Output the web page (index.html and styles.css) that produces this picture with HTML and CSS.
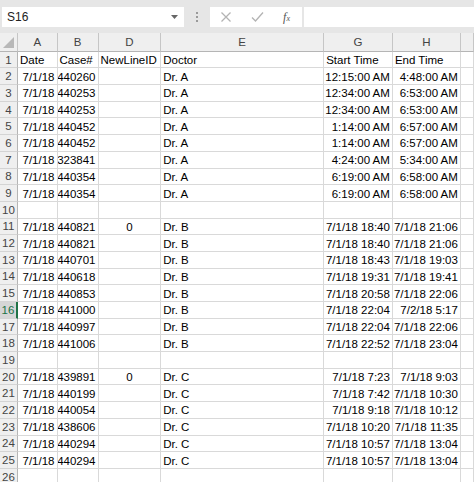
FILE: index.html
```html
<!DOCTYPE html>
<html>
<head>
<meta charset="utf-8">
<link rel="stylesheet" href="styles.css">
</head>
<body>
<div class="fbar">
  <div class="namebox"><span class="nb-text">S16</span>
    <svg class="dd" width="7" height="4" viewBox="0 0 7 4"><polygon points="0,0 7,0 3.5,4" fill="#666"/></svg>
  </div>
  <div class="dots"><i></i><i></i><i></i></div>
  <div class="btns">
    <svg class="ic" width="12" height="12" viewBox="0 0 12 12"><path d="M1.5 1.5 L10.5 10.5 M10.5 1.5 L1.5 10.5" stroke="#b3b3b3" stroke-width="1.3" fill="none"/></svg>
    <svg class="ic" width="13" height="12" viewBox="0 0 13 12"><path d="M1 6.5 L4.5 10 L12 1.5" stroke="#b3b3b3" stroke-width="1.3" fill="none"/></svg>
    <span class="fx">f<sub>x</sub></span>
  </div>
  <div class="finput"></div>
</div>
<div class="sheet">
  <div class="ch corner"><svg width="11" height="11" viewBox="0 0 11 11"><polygon points="11,0 11,11 0,11" fill="#b8b8b8"/></svg></div>
  <div class="ch">A</div><div class="ch">B</div><div class="ch">D</div><div class="ch">E</div><div class="ch">G</div><div class="ch">H</div><div class="ch"></div>

  <div class="rh">1</div><div class="c">Date</div><div class="c">Case#</div><div class="c">NewLineID</div><div class="c">Doctor</div><div class="c">Start Time</div><div class="c">End Time</div><div class="c"></div>
  <div class="rh">2</div><div class="c r">7/1/18</div><div class="c r">440260</div><div class="c"></div><div class="c">Dr. A</div><div class="c r">12:15:00 AM</div><div class="c r">4:48:00 AM</div><div class="c"></div>
  <div class="rh">3</div><div class="c r">7/1/18</div><div class="c r">440253</div><div class="c"></div><div class="c">Dr. A</div><div class="c r">12:34:00 AM</div><div class="c r">6:53:00 AM</div><div class="c"></div>
  <div class="rh">4</div><div class="c r">7/1/18</div><div class="c r">440253</div><div class="c"></div><div class="c">Dr. A</div><div class="c r">12:34:00 AM</div><div class="c r">6:53:00 AM</div><div class="c"></div>
  <div class="rh">5</div><div class="c r">7/1/18</div><div class="c r">440452</div><div class="c"></div><div class="c">Dr. A</div><div class="c r">1:14:00 AM</div><div class="c r">6:57:00 AM</div><div class="c"></div>
  <div class="rh">6</div><div class="c r">7/1/18</div><div class="c r">440452</div><div class="c"></div><div class="c">Dr. A</div><div class="c r">1:14:00 AM</div><div class="c r">6:57:00 AM</div><div class="c"></div>
  <div class="rh">7</div><div class="c r">7/1/18</div><div class="c r">323841</div><div class="c"></div><div class="c">Dr. A</div><div class="c r">4:24:00 AM</div><div class="c r">5:34:00 AM</div><div class="c"></div>
  <div class="rh">8</div><div class="c r">7/1/18</div><div class="c r">440354</div><div class="c"></div><div class="c">Dr. A</div><div class="c r">6:19:00 AM</div><div class="c r">6:58:00 AM</div><div class="c"></div>
  <div class="rh">9</div><div class="c r">7/1/18</div><div class="c r">440354</div><div class="c"></div><div class="c">Dr. A</div><div class="c r">6:19:00 AM</div><div class="c r">6:58:00 AM</div><div class="c"></div>
  <div class="rh">10</div><div class="c"></div><div class="c"></div><div class="c"></div><div class="c"></div><div class="c"></div><div class="c"></div><div class="c"></div>
  <div class="rh">11</div><div class="c r">7/1/18</div><div class="c r">440821</div><div class="c m">0</div><div class="c">Dr. B</div><div class="c r">7/1/18 18:40</div><div class="c r">7/1/18 21:06</div><div class="c"></div>
  <div class="rh">12</div><div class="c r">7/1/18</div><div class="c r">440821</div><div class="c"></div><div class="c">Dr. B</div><div class="c r">7/1/18 18:40</div><div class="c r">7/1/18 21:06</div><div class="c"></div>
  <div class="rh">13</div><div class="c r">7/1/18</div><div class="c r">440701</div><div class="c"></div><div class="c">Dr. B</div><div class="c r">7/1/18 18:43</div><div class="c r">7/1/18 19:03</div><div class="c"></div>
  <div class="rh">14</div><div class="c r">7/1/18</div><div class="c r">440618</div><div class="c"></div><div class="c">Dr. B</div><div class="c r">7/1/18 19:31</div><div class="c r">7/1/18 19:41</div><div class="c"></div>
  <div class="rh">15</div><div class="c r">7/1/18</div><div class="c r">440853</div><div class="c"></div><div class="c">Dr. B</div><div class="c r">7/1/18 20:58</div><div class="c r">7/1/18 22:06</div><div class="c"></div>
  <div class="rh sel">16</div><div class="c r">7/1/18</div><div class="c r">441000</div><div class="c"></div><div class="c">Dr. B</div><div class="c r">7/1/18 22:04</div><div class="c r">7/2/18 5:17</div><div class="c"></div>
  <div class="rh">17</div><div class="c r">7/1/18</div><div class="c r">440997</div><div class="c"></div><div class="c">Dr. B</div><div class="c r">7/1/18 22:04</div><div class="c r">7/1/18 22:06</div><div class="c"></div>
  <div class="rh">18</div><div class="c r">7/1/18</div><div class="c r">441006</div><div class="c"></div><div class="c">Dr. B</div><div class="c r">7/1/18 22:52</div><div class="c r">7/1/18 23:04</div><div class="c"></div>
  <div class="rh">19</div><div class="c"></div><div class="c"></div><div class="c"></div><div class="c"></div><div class="c"></div><div class="c"></div><div class="c"></div>
  <div class="rh">20</div><div class="c r">7/1/18</div><div class="c r">439891</div><div class="c m">0</div><div class="c">Dr. C</div><div class="c r">7/1/18 7:23</div><div class="c r">7/1/18 9:03</div><div class="c"></div>
  <div class="rh">21</div><div class="c r">7/1/18</div><div class="c r">440199</div><div class="c"></div><div class="c">Dr. C</div><div class="c r">7/1/18 7:42</div><div class="c r">7/1/18 10:30</div><div class="c"></div>
  <div class="rh">22</div><div class="c r">7/1/18</div><div class="c r">440054</div><div class="c"></div><div class="c">Dr. C</div><div class="c r">7/1/18 9:18</div><div class="c r">7/1/18 10:12</div><div class="c"></div>
  <div class="rh">23</div><div class="c r">7/1/18</div><div class="c r">438606</div><div class="c"></div><div class="c">Dr. C</div><div class="c r">7/1/18 10:20</div><div class="c r">7/1/18 11:35</div><div class="c"></div>
  <div class="rh">24</div><div class="c r">7/1/18</div><div class="c r">440294</div><div class="c"></div><div class="c">Dr. C</div><div class="c r">7/1/18 10:57</div><div class="c r">7/1/18 13:04</div><div class="c"></div>
  <div class="rh">25</div><div class="c r">7/1/18</div><div class="c r">440294</div><div class="c"></div><div class="c">Dr. C</div><div class="c r">7/1/18 10:57</div><div class="c r">7/1/18 13:04</div><div class="c"></div>
  <div class="rh">26</div><div class="c"></div><div class="c"></div><div class="c"></div><div class="c"></div><div class="c"></div><div class="c"></div><div class="c"></div>
</div>
</body>
</html>
```
FILE: styles.css
```css
html, body {
  margin: 0;
  padding: 0;
  background: #ffffff;
  overflow: hidden;
}
body {
  width: 474px;
  height: 482px;
  font-family: "Liberation Sans", Arial, sans-serif;
}
.fbar {
  height: 33px;
  background: #e6e6e6;
  display: flex;
  align-items: flex-start;
  padding-top: 7px;
  box-sizing: border-box;
}
.namebox {
  margin-left: 2px;
  width: 182px;
  height: 20px;
  background: #fff;
  display: flex;
  align-items: center;
  justify-content: space-between;
  padding: 0 5px 0 5px;
  box-sizing: border-box;
}
.nb-text {
  font-size: 12px;
  color: #222;
}
.dd { margin-right: 1px; margin-top: -1px; }
.dots {
  width: 26px;
  height: 20px;
  display: flex;
  flex-direction: column;
  align-items: center;
  justify-content: center;
  gap: 2px;
}
.dots i {
  display: block;
  width: 2px;
  height: 2px;
  background: #9a9a9a;
}
.btns {
  width: 92px;
  height: 20px;
  background: #fff;
  display: flex;
  align-items: center;
  justify-content: space-between;
  padding: 0 12px 0 10px;
  box-sizing: border-box;
}
.fx {
  font-family: "Liberation Serif", "Times New Roman", serif;
  font-style: italic;
  font-size: 12px;
  color: #555;
}
.fx sub {
  font-size: 8px;
  vertical-align: 0;
}
.finput {
  flex: 1;
  margin-left: 2px;
  height: 20px;
  background: #fff;
}
.sheet {
  display: grid;
  grid-template-columns: 18px 39.5px 41px 62.7px 163px 68.7px 68px 1fr;
  grid-template-rows: 18.7px;
  grid-auto-rows: 16.7px;
  font-size: 11.5px;
  color: #000;
}
.sheet > div {
  box-sizing: border-box;
  white-space: nowrap;
  overflow: hidden;
  display: flex;
  align-items: center;
}
.ch {
  background: #efefef;
  border-right: 1px solid #c6c6c6;
  border-bottom: 1px solid #b5b5b5;
  justify-content: center;
  color: #444;
  font-size: 11.5px;
}
.corner {
  justify-content: flex-end;
  align-items: flex-end !important;
  padding: 0 3px 3px 0;
}
.rh {
  background: #efefef;
  border-right: 1px solid #b5b5b5;
  border-bottom: 1px solid #d4d4d4;
  justify-content: center;
  color: #444;
  font-size: 11.5px;
}
.rh.sel {
  background: #d6d6d6;
  color: #217346;
  border-right: 2px solid #217346;
}
.c {
  border-right: 1px solid #d9d9d9;
  border-bottom: 1px solid #d9d9d9;
  padding: 1px 2px 0 2px;
}
.c.r { justify-content: flex-end; }
.c.m { justify-content: center; }
```
